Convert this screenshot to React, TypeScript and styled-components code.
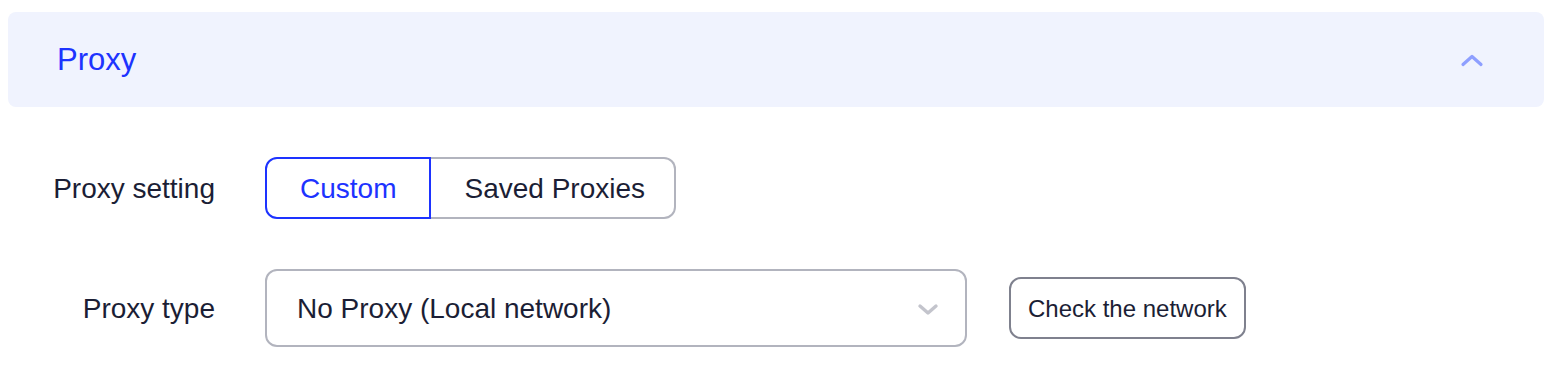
import { FC, useState } from 'react';

import styled, { createGlobalStyle } from 'styled-components';

const COLOR_PRIMARY = '#1d33ff';
const COLOR_TEXT = '#1b1e35';
const COLOR_BORDER = '#b2b4be';
const COLOR_HEADER_BG = '#f0f3fe';

const GlobalStyle = createGlobalStyle`
  body {
    margin: 8px;
    background: #ffffff;
    font-family: 'Liberation Sans', Arial, sans-serif;
    color: ${COLOR_TEXT};
  }
`;

type Mode = 'custom' | 'saved';

const ChevronUp: FC = () => (
  <svg width="24" height="14" viewBox="0 0 24 14" fill="none">
    <path d="M3 11.5L12 3.5L21 11.5" stroke="#8e9fff" strokeWidth="3.2" strokeLinecap="round" strokeLinejoin="round" />
  </svg>
);

const ChevronDown: FC = () => (
  <svg width="22" height="13" viewBox="0 0 22 13" fill="none">
    <path d="M3 3L11 10L19 3" stroke="#c3c4cc" strokeWidth="3.4" strokeLinecap="round" strokeLinejoin="round" />
  </svg>
);

const App: FC = () => {
  const [mode, setMode] = useState<Mode>('custom');

  return (
    <>
      <GlobalStyle />
      <Section>
        <Header>
          <Title>Proxy</Title>
          <ChevronUp />
        </Header>
        <Body>
          <Row>
            <Label>Proxy setting</Label>
            <Segmented>
              <Segment active={mode === 'custom'} first onClick={() => setMode('custom')}>
                Custom
              </Segment>
              <Segment active={mode === 'saved'} onClick={() => setMode('saved')}>
                Saved Proxies
              </Segment>
            </Segmented>
          </Row>
          <Row>
            <Label>Proxy type</Label>
            <Controls>
              <Select>
                <span>No Proxy (Local network)</span>
                <ChevronDown />
              </Select>
              <CheckButton>Check the network</CheckButton>
            </Controls>
          </Row>
        </Body>
      </Section>
    </>
  );
};

export default App;

const Section = styled.section`
  margin: 4px 2px 0 0;
`;

const Header = styled.div`
  display: flex;
  align-items: center;
  justify-content: space-between;
  height: 95px;
  padding: 0 60px 0 49px;
  box-sizing: border-box;
  background: ${COLOR_HEADER_BG};
  border-radius: 8px;
`;

const Title = styled.h2`
  margin: 0;
  font-size: 31px;
  font-weight: 400;
  color: ${COLOR_PRIMARY};
  line-height: 1;
`;

const Body = styled.div`
  display: flex;
  flex-direction: column;
  gap: 50px;
  padding-top: 50px;
`;

const Row = styled.div`
  display: flex;
  align-items: center;
  gap: 50px;
`;

const Label = styled.label`
  width: 207px;
  padding-top: 2px;
  text-align: right;
  font-size: 28px;
  color: ${COLOR_TEXT};
  white-space: nowrap;
`;

const Segmented = styled.div`
  display: flex;
`;

const Segment = styled.button<{ active: boolean; first?: boolean }>`
  height: 62px;
  padding: ${({ first }) => (first ? '2px 33px 0' : '2px 29px 0 33px')};
  box-sizing: border-box;
  background: #ffffff;
  font-family: inherit;
  font-size: 28px;
  cursor: pointer;
  color: ${({ active }) => (active ? COLOR_PRIMARY : COLOR_TEXT)};
  border: ${({ active }) => (active ? `2px solid ${COLOR_PRIMARY}` : `2px solid ${COLOR_BORDER}`)};
  border-left: ${({ active, first }) =>
    active ? `2px solid ${COLOR_PRIMARY}` : first ? `2px solid ${COLOR_BORDER}` : 'none'};
  border-radius: ${({ first }) => (first ? '12px 0 0 12px' : '0 12px 12px 0')};
`;

const Controls = styled.div`
  display: flex;
  align-items: center;
  gap: 42px;
`;

const Select = styled.div`
  display: flex;
  align-items: center;
  justify-content: space-between;
  width: 702px;
  height: 78px;
  padding: 2px 26px 0 30px;
  box-sizing: border-box;
  border: 2px solid ${COLOR_BORDER};
  border-radius: 12px;
  font-size: 28px;
  color: ${COLOR_TEXT};
  cursor: pointer;
`;

const CheckButton = styled.button`
  height: 62px;
  padding: 2px 17px 0;
  box-sizing: border-box;
  background: #ffffff;
  border: 2px solid #7f818e;
  border-radius: 12px;
  font-family: inherit;
  font-size: 24px;
  color: ${COLOR_TEXT};
  cursor: pointer;
`;
